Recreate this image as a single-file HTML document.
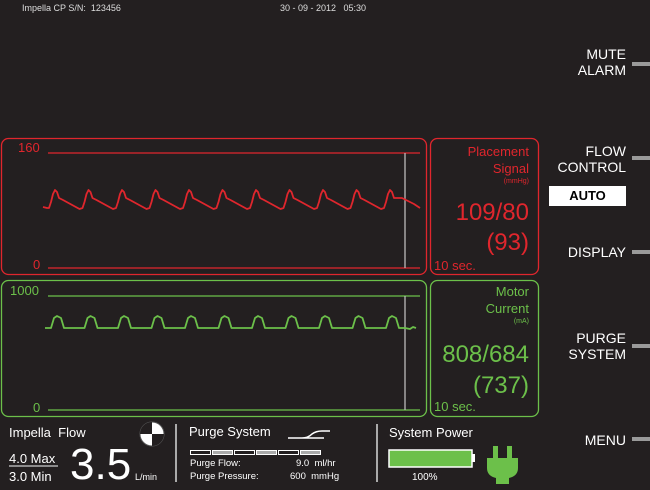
<!DOCTYPE html><html><head><meta charset="utf-8"><style>
body{margin:0;width:650px;height:490px;background:#231f20;font-family:"Liberation Sans",sans-serif;overflow:hidden;position:relative;color:#fff}
.a{position:absolute;white-space:nowrap}
.m{position:absolute;right:24px;text-align:right;font-size:14px;line-height:16px;color:#fff}
.t{position:absolute;right:0;width:18px;height:4px;background:#9a9a9a}
</style></head><body>
<div class="a" style="left:22px;top:3px;font-size:9px;color:#ddd">Impella CP S/N:&nbsp; 123456</div>
<div class="a" style="left:280px;top:3px;font-size:9px;color:#ddd">30 - 09 - 2012 &nbsp; 05:30</div>

<div class="m" style="top:46px">MUTE<br>ALARM</div><div class="t" style="top:62px"></div>
<div class="m" style="top:143px">FLOW<br>CONTROL</div><div class="t" style="top:156px"></div>
<div class="a" style="left:549px;top:186px;width:77px;height:20px;background:#fff;color:#000;font-weight:bold;font-size:13px;text-align:center;line-height:20px">AUTO</div>
<div class="m" style="top:244px">DISPLAY</div><div class="t" style="top:250px"></div>
<div class="m" style="top:330px">PURGE<br>SYSTEM</div><div class="t" style="top:344px"></div>
<div class="m" style="top:432px">MENU</div><div class="t" style="top:437px"></div>

<svg class="a" style="left:0;top:0" width="650" height="490">
<g fill="none" stroke-width="1.3">
<rect x="1.5" y="138.5" width="425" height="136" rx="7" stroke="#e0262d"/>
<rect x="430.5" y="138.5" width="108" height="136" rx="7" stroke="#e0262d"/>
<rect x="1.5" y="280.5" width="425" height="136" rx="7" stroke="#6cc04a"/>
<rect x="430.5" y="280.5" width="108" height="136" rx="7" stroke="#6cc04a"/>
<line x1="48" y1="153" x2="420" y2="153" stroke="#e0262d"/>
<line x1="48" y1="268" x2="420" y2="268" stroke="#e0262d"/>
<line x1="48" y1="296" x2="420" y2="296" stroke="#6cc04a"/>
<line x1="48" y1="410" x2="420" y2="410" stroke="#6cc04a"/>
<line x1="405" y1="153" x2="405" y2="268" stroke="#bbb"/>
<line x1="405" y1="296" x2="405" y2="410" stroke="#bbb"/>
<path stroke="#e0262d" stroke-width="1.8" stroke-linejoin="round" d="M43,207 l4,1 l2,0
l2,-6 l2,-8 l2,-4 l2,2 l2,6 l4,2 l5.5,3 l5.5,3 l5.5,3 l3,-1
l2,-6 l2,-8 l2,-4 l2,2 l2,6 l4,2 l5.5,3 l5.5,3 l5.5,3 l3,-1
l2,-6 l2,-8 l2,-4 l2,2 l2,6 l4,2 l5.5,3 l5.5,3 l5.5,3 l3,-1
l2,-6 l2,-8 l2,-4 l2,2 l2,6 l4,2 l5.5,3 l5.5,3 l5.5,3 l3,-1
l2,-6 l2,-8 l2,-4 l2,2 l2,6 l4,2 l5.5,3 l5.5,3 l5.5,3 l3,-1
l2,-6 l2,-8 l2,-4 l2,2 l2,6 l4,2 l5.5,3 l5.5,3 l5.5,3 l3,-1
l2,-6 l2,-8 l2,-4 l2,2 l2,6 l4,2 l5.5,3 l5.5,3 l5.5,3 l3,-1
l2,-6 l2,-8 l2,-4 l2,2 l2,6 l4,2 l5.5,3 l5.5,3 l5.5,3 l3,-1
l2,-6 l2,-8 l2,-4 l2,2 l2,6 l4,2 l5.5,3 l5.5,3 l5.5,3 l3,-1
l2,-6 l2,-8 l2,-4 l2,2 l2,6 l4,2 l5.5,3 l5.5,3 l5.5,3 l3,-1
l2,-6 l2,-8 l2,-4 l2,2 l2,6 l8,0 l6,3 l6,3 l6,4"/>
<path stroke="#6cc04a" stroke-width="1.8" stroke-linejoin="round" d="M45,328 l6,0
l3,-10 l3,-2 l4,2 l3,10 l20.5,0 l3,-10 l3,-2 l4,2 l3,10 l20.5,0 l3,-10 l3,-2 l4,2 l3,10 l20.5,0
l3,-10 l3,-2 l4,2 l3,10 l20.5,0 l3,-10 l3,-2 l4,2 l3,10 l20.5,0 l3,-10 l3,-2 l4,2 l3,10 l20.5,0
l3,-10 l3,-2 l4,2 l3,10 l20.5,0 l3,-10 l3,-2 l4,2 l3,10 l20.5,0 l3,-10 l3,-2 l4,2 l3,10 l20.5,0
l3,-10 l3,-2 l4,2 l3,10 l20.5,0 l3,-10 l3,-2 l4,2 l3,10 l6,0 l5,1 l3,-2 l3,1"/>
<line x1="176" y1="424" x2="176" y2="482" stroke="#aaa" stroke-width="2"/>
<line x1="377" y1="424" x2="377" y2="482" stroke="#aaa" stroke-width="2"/>
<line x1="9" y1="466" x2="58" y2="466" stroke="#ccc"/>
<path stroke="#fff" stroke-width="1.5" d="M288,438 h14 q6,0 10,-4 q4,-3 10,-3 h8 M288,438 h36"/>
</g>
<circle cx="152" cy="434" r="12" fill="#fff" stroke="#555"/>
<path d="M152,422 A12,12 0 0 0 140,434 H152Z M152,434 H164 A12,12 0 0 1 152,446Z" fill="#231f20"/>
<g fill="#aaa" stroke="#fff" stroke-width="1"><rect x="190.5" y="450.5" width="20" height="4" fill="#231f20"/><rect x="212.5" y="450.5" width="20" height="4"/><rect x="234.5" y="450.5" width="20" height="4" fill="#231f20"/><rect x="256.5" y="450.5" width="20" height="4"/><rect x="278.5" y="450.5" width="20" height="4" fill="#231f20"/><rect x="300.5" y="450.5" width="20" height="4"/></g>
<rect x="389" y="450" width="83" height="17" fill="#6cc04a" stroke="#fff" stroke-width="1.5"/>
<rect x="472" y="454" width="3" height="8" fill="#fff"/>
<path d="M493,458 v-12 h5 v12 h9 v-12 h5 v12 h6 v10 q0,8 -9,10 v6 h-13 v-6 q-9,-2 -9,-10 v-10z" fill="#6cc04a"/>
</svg>

<div class="a" style="left:18px;top:140px;font-size:13px;color:#e0262d">160</div>
<div class="a" style="left:33px;top:257px;font-size:13px;color:#e0262d">0</div>
<div class="a" style="right:121px;top:143px;font-size:13px;color:#e0262d;text-align:right;line-height:17px">Placement<br>Signal</div>
<div class="a" style="right:121px;top:178px;font-size:7px;color:#e0262d">(mmHg)</div>
<div class="a" style="right:121px;top:199px;font-size:24px;color:#e0262d">109/80</div>
<div class="a" style="right:121px;top:229px;font-size:24px;color:#e0262d">(93)</div>
<div class="a" style="left:434px;top:258px;font-size:13px;color:#e0262d">10 sec.</div>

<div class="a" style="left:10px;top:283px;font-size:13px;color:#6cc04a">1000</div>
<div class="a" style="left:33px;top:400px;font-size:13px;color:#6cc04a">0</div>
<div class="a" style="right:121px;top:283px;font-size:13px;color:#6cc04a;text-align:right;line-height:17px">Motor<br>Current</div>
<div class="a" style="right:121px;top:318px;font-size:7px;color:#6cc04a">(mA)</div>
<div class="a" style="right:121px;top:341px;font-size:24px;color:#6cc04a">808/684</div>
<div class="a" style="right:121px;top:372px;font-size:24px;color:#6cc04a">(737)</div>
<div class="a" style="left:434px;top:399px;font-size:13px;color:#6cc04a">10 sec.</div>

<div class="a" style="left:9px;top:425px;font-size:13px">Impella&nbsp; Flow</div>
<div class="a" style="left:9px;top:451px;font-size:13px">4.0 Max</div>
<div class="a" style="left:9px;top:469px;font-size:13px">3.0 Min</div>
<div class="a" style="left:70px;top:443px;font-size:44px;line-height:44px">3.5</div>
<div class="a" style="left:135px;top:472px;font-size:9px">L/min</div>
<div class="a" style="left:189px;top:424px;font-size:13px">Purge System</div>
<div class="a" style="left:190px;top:458px;font-size:9.5px">Purge Flow:</div>
<div class="a" style="left:190px;top:471px;font-size:9.5px">Purge Pressure:</div>
<div class="a" style="left:296px;top:458px;font-size:9.5px">9.0&nbsp; ml/hr</div>
<div class="a" style="left:290px;top:471px;font-size:9.5px">600&nbsp; mmHg</div>
<div class="a" style="left:389px;top:425px;font-size:13px">System Power</div>
<div class="a" style="left:412px;top:472px;font-size:10px">100%</div>
</body></html>
